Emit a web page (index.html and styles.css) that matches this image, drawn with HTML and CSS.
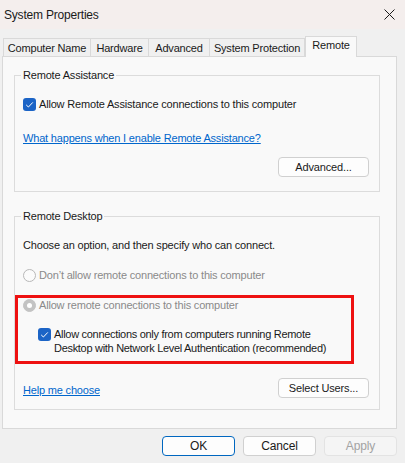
FILE: index.html
```html
<!DOCTYPE html>
<html lang="en">
<head>
<meta charset="utf-8">
<title>System Properties</title>
<link rel="stylesheet" href="styles.css">
</head>
<body>
<div class="window">
  <div class="titlebar">
    <span class="title">System Properties</span>
    <svg class="close" width="11" height="11" viewBox="0 0 11 11"><path d="M0.5 0.5 L10.5 10.5 M10.5 0.5 L0.5 10.5" stroke="#1a1a1a" stroke-width="1" fill="none"/></svg>
  </div>

  <div class="tabs">
    <div class="tab tab-name">Computer Name</div>
    <div class="tab tab-hw">Hardware</div>
    <div class="tab tab-adv">Advanced</div>
    <div class="tab tab-sp">System Protection</div>
    <div class="tab tab-remote active">Remote</div>
  </div>

  <div class="panel">
    <fieldset class="group">
      <legend>Remote Assistance</legend>
      <div class="row check-row ra-check">
        <span class="checkbox"><svg width="13" height="13" viewBox="0 0 13 13"><path d="M3.2 6.9 L5.4 9 L9.8 4.4" stroke="#fff" stroke-width="1" fill="none"/></svg></span>
        <span>Allow Remote Assistance connections to this computer</span>
      </div>
      <div class="row link-row"><a class="link" href="#">What happens when I enable Remote Assistance?</a></div>
      <div class="btn-row adv-row"><button class="btn wide">Advanced...</button></div>
    </fieldset>

    <fieldset class="group rd">
      <legend>Remote Desktop</legend>
      <div class="row choose">Choose an option, and then specify who can connect.</div>
      <div class="row radio-row disabled first-radio">
        <span class="radio"></span>
        <span>Don’t allow remote connections to this computer</span>
      </div>
      <div class="highlight">
        <div class="row radio-row disabled">
          <span class="radio on"></span>
          <span>Allow remote connections to this computer</span>
        </div>
        <div class="nla">
          <span class="checkbox"><svg width="13" height="13" viewBox="0 0 13 13"><path d="M3.2 6.9 L5.4 9 L9.8 4.4" stroke="#fff" stroke-width="1" fill="none"/></svg></span>
          <span class="nla-text">Allow connections only from computers running Remote<br>Desktop with Network Level Authentication (recommended)</span>
        </div>
      </div>
      <div class="btn-row help-row">
        <a class="link help" href="#">Help me choose</a>
        <button class="btn wide">Select Users...</button>
      </div>
    </fieldset>
  </div>

  <div class="footer">
    <button class="btn dlg default">OK</button>
    <button class="btn dlg">Cancel</button>
    <button class="btn dlg" disabled>Apply</button>
  </div>
</div>
</body>
</html>
```

FILE: styles.css
```css
* { box-sizing: border-box; }

html, body {
  margin: 0;
  padding: 0;
}

body {
  width: 405px;
  height: 463px;
  overflow: hidden;
  background: #f0f0f0;
  font-family: "Liberation Sans", Arial, sans-serif;
  font-size: 11px;
  letter-spacing: -0.18px;
  color: #1a1a1a;
}

.window {
  width: 405px;
  height: 463px;
  display: flex;
  flex-direction: column;
}

.titlebar {
  height: 29px;
  flex: none;
  background: #f4eeed;
  display: flex;
  align-items: center;
  justify-content: space-between;
  padding: 0 10px 0 4px;
  font-size: 12px;
  letter-spacing: -0.2px;
}

.close { display: block; margin-top: -1px; }

.tabs {
  margin-top: 7px;
  height: 20px;
  padding-left: 3px;
  display: flex;
  align-items: flex-end;
  flex: none;
}

.tab {
  height: 18px;
  line-height: 18px;
  border: 1px solid #d9d9d9;
  border-bottom: none;
  border-right: none;
  background: #f0f0f0;
  text-align: center;
  white-space: nowrap;
}

.tab-name { width: 87px; }
.tab-hw { width: 58px; }
.tab-adv { width: 61px; }
.tab-sp { width: 96px; border-right: 1px solid #d9d9d9; }

.tab.active {
  width: 52px;
  height: 21px;
  line-height: 17px;
  margin-bottom: -1px;
  background: #f9f9f9;
  border-right: 1px solid #d9d9d9;
  position: relative;
  z-index: 1;
}

.panel {
  margin: 0 8px 0 2px;
  height: 373px;
  flex: none;
  border: 1px solid #d9d9d9;
  background: #f9f9f9;
  padding: 10px 16px 0 11px;
}

.group {
  margin: 0;
  border: 1px solid #dcdcdc;
  padding: 0 10px 14px 8px;
  min-width: 0;
}

.group legend {
  padding: 0 2px;
  margin-left: -2px;
  line-height: 16px;
  height: 16px;
}

.group.rd {
  margin-top: 16px;
  padding-bottom: 11px;
}

.row {
  line-height: 16px;
  height: 16px;
  white-space: nowrap;
}

.check-row, .radio-row {
  display: flex;
  align-items: center;
}

.ra-check { margin-top: 13px; }

.checkbox {
  width: 13px;
  height: 13px;
  flex: none;
  border-radius: 3px;
  background: #1c64c6;
  margin-right: 3px;
  display: block;
}

.checkbox svg { display: block; }

.link-row { margin-top: 18px; }

.link {
  color: #0066cc;
  text-decoration: underline;
}

.btn-row {
  display: flex;
  justify-content: flex-end;
  align-items: center;
}

.adv-row { margin-top: 11px; }

.btn {
  font-family: inherit;
  font-size: 11px;
  letter-spacing: -0.15px;
  color: #1a1a1a;
  height: 20px;
  padding: 0;
  background: #fdfdfd;
  border: 1px solid #d0d0d0;
  border-radius: 4px;
}

.btn.wide { width: 91px; }

.choose { margin-top: 13px; }

.first-radio { margin-top: 14px; }

.radio {
  width: 13px;
  height: 13px;
  flex: none;
  border-radius: 50%;
  border: 1px solid #b8b8b8;
  background: #fbfbfb;
  margin-right: 3px;
  display: flex;
  align-items: center;
  justify-content: center;
}

.radio.on {
  background: #c3c3c3;
  border-color: #c3c3c3;
}

.radio.on::after {
  content: "";
  width: 5px;
  height: 5px;
  border-radius: 50%;
  background: #fff;
}

.disabled { color: #8a8a8a; }

.highlight {
  margin-top: 12px;
  margin-left: -8px;
  width: 339px;
  border: 3px solid #ee1111;
  padding: 0 0 6px 5px;
}

.highlight .radio-row { margin-top: -1px; }

.nla {
  margin-top: 14px;
  margin-left: 15px;
  display: flex;
  align-items: flex-start;
  line-height: 14px;
  white-space: nowrap;
  letter-spacing: -0.3px;
}

.nla .checkbox { margin-top: 1px; }

.help-row {
  margin-top: 14px;
  justify-content: space-between;
}

.help { padding-top: 3px; }

.footer {
  margin-top: 7px;
  padding-right: 8px;
  display: flex;
  justify-content: flex-end;
  gap: 8px;
}

.btn.dlg {
  width: 73px;
  font-size: 12px;
}

.btn.default {
  border: 1px solid #0067c0;
  background: #fdfdfd;
}

.btn.dlg:disabled {
  color: #a3a3a3;
  background: #f5f5f5;
  border-color: #e3e3e3;
}
```
